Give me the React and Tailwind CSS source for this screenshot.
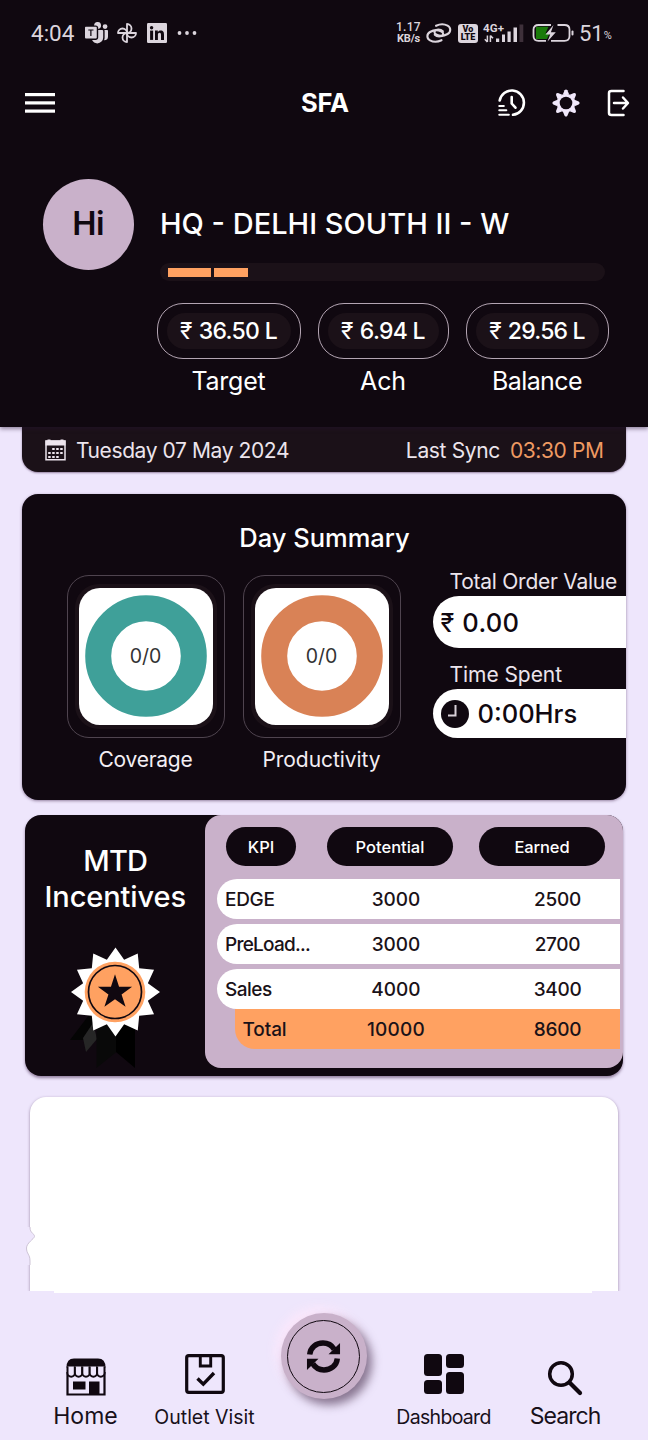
import React from "react";
import { BsMicrosoftTeams } from "react-icons/bs";

const stats = [
  { label: "Target", value: "36.50 L", box: "w-[144px]", text: "tracking-[-0.7px]", labelText: "tracking-[-0.2px]" },
  { label: "Ach", value: "6.94 L", box: "w-[131px]", text: "tracking-[-0.7px]", labelText: "tracking-[-0.1px]" },
  { label: "Balance", value: "29.56 L", box: "w-[143px]", text: "tracking-[-0.8px]", labelText: "tracking-[-0.6px]" },
];

const charts = [
  { label: "Coverage", value: "0/0", color: "#3fa099", text: "tracking-[-0.25px]" },
  { label: "Productivity", value: "0/0", color: "#d98256", text: "tracking-[-0.05px]" },
];

const incentives = [
  { kpi: "EDGE", potential: 3000, earned: 2500, text: "tracking-[-0.3px]" },
  { kpi: "PreLoad...", potential: 3000, earned: 2700, text: "tracking-[-0.75px]" },
  { kpi: "Sales", potential: 4000, earned: 3400, text: "tracking-[-0.5px]" },
];

const polar = (cx, cy, r, deg) => {
  const a = ((deg - 90) * Math.PI) / 180;
  return `${(cx + r * Math.cos(a)).toFixed(2)},${(cy + r * Math.sin(a)).toFixed(2)}`;
};

const burst = (cx, cy, outer, inner, points) =>
  Array.from({ length: points * 2 }, (_, i) =>
    polar(cx, cy, i % 2 === 0 ? outer : inner, (i * 180) / points)
  ).join(" ");

const StatusBar = () => (
  <div className="flex h-[66px] items-center pl-[31px] font-[Roboto] text-[#dcd5dd]">
    <span className="w-[54px] pt-px text-[22.5px]">4:04</span>
    <BsMicrosoftTeams className="h-[23px] w-[23px]" />
    <svg className="ml-[9px] h-5 w-5" viewBox="0 0 20 20" fill="none" stroke="currentColor" strokeWidth="1.8" strokeLinejoin="round">
      {[0, 90, 180, 270].map((deg) => (
        <path key={deg} d="M10 10V1A4.5 4.5 0 0 1 14.5 5.5A4.5 4.5 0 0 1 10 10" transform={`rotate(${deg} 10 10)`} />
      ))}
    </svg>
    <svg className="ml-[10px] h-5 w-5" viewBox="0 0 20 20">
      <rect width="20" height="20" rx="1.2" fill="currentColor" />
      <g fill="#100810">
        <circle cx="4.6" cy="4.7" r="1.7" />
        <rect x="3.1" y="7.6" width="3" height="9.3" />
        <path d="M8 7.6h2.8v1.3c.5-.9 1.5-1.5 2.8-1.5 2.8 0 3.4 1.8 3.4 4.3v5.2h-3v-4.7c0-1.2-.1-2.4-1.5-2.4s-1.6 1.1-1.6 2.3v4.8H8z" />
      </g>
    </svg>
    <svg className="ml-[10px] h-1 w-5" viewBox="0 0 20 4" fill="currentColor">
      <circle cx="2.5" cy="2" r="1.9" />
      <circle cx="10" cy="2" r="1.9" />
      <circle cx="17.5" cy="2" r="1.9" />
    </svg>

    <div className="ml-[199px] flex w-[25px] flex-col items-center font-medium whitespace-nowrap">
      <span className="text-[12px] leading-[12px] tracking-[0.3px]">1.17</span>
      <span className="text-[11px] leading-[12px] font-bold tracking-[-0.2px]">KB/s</span>
    </div>
    <svg className="ml-[5px] h-5 w-[26px]" viewBox="0 0 26 20" fill="none" stroke="currentColor" strokeWidth="2.1" strokeLinecap="round">
      {[0, 180].map((deg) => (
        <path
          key={deg}
          d="M15.5 17.2C12 19 7 19 4 17.4C0.500 15.500 0.500 11 4 9C7.500 7 12 6.800 15 8.300C18 9.800 18 12.600 14.500 13.300C12 13.600 10 13 8.800 11.800"
          transform={`rotate(${deg} 12.8 10)`}
        />
      ))}
    </svg>
    <div className="ml-[6px] flex h-[19px] w-5 flex-col items-center justify-center rounded-[3px] bg-[#dcd5dd] text-[9px] leading-[8px] font-black text-[#100810]">
      <span>Vo</span>
      <span>LTE</span>
    </div>
    <div className="ml-[5px] flex h-5 w-[41px] items-end">
      <div className="flex w-[15px] flex-col">
        <span className="-mt-[3px] text-[11.5px] leading-[12px] font-bold tracking-[0.1px]">4G+</span>
        <svg className="ml-px h-[9px] w-[10px]" viewBox="0 0 10 9" fill="none" stroke="currentColor" strokeWidth="1.5">
          <path d="M3.400 1.500v6.500M0.800 5.300l2.600 2.700M6.400 8V1.500M9 4.200L6.400 1.500" />
        </svg>
      </div>
      <svg className="h-5 w-[26px] overflow-visible" viewBox="0 0 26 20" fill="currentColor">
        <rect x="-2" y="15.500" width="3.200" height="3.500" />
        <rect x="4" y="11.500" width="3" height="7.500" />
        <rect x="9.500" y="8.500" width="3.200" height="10.500" />
        <rect x="15.500" y="4.500" width="3.500" height="14.500" />
        <rect x="21.500" y="1.500" width="3.800" height="17.500" fill="#3e303a" />
      </svg>
    </div>
    <svg className="ml-[8px] h-5 w-[42px]" viewBox="0 0 42 20">
      <path d="M4 3.700h12.500l-3 6.500h4l-2.500 5.800H4z" fill="#1a7a0a" />
      <path d="M19 2H6.500Q1.500 2 1.500 6.500v6.500q0 4.800 5 4.800H14M25.500 2h7q5 0 5 4.500v6.500q0 4.800-5 4.800H19" fill="none" stroke="currentColor" strokeWidth="1.8" />
      <path d="M21.500 2l-8 9.500h4.700L15.500 18.500l8.300-9.300h-4.900z" fill="currentColor" />
      <rect x="39.500" y="7.500" width="2" height="5" rx="1" fill="currentColor" />
    </svg>
    <span className="ml-[5px] pt-px text-[22px]">51</span>
    <span className="mt-[6px] text-[11px]">%</span>
  </div>
);

const Toolbar = () => (
  <div className="flex h-[74px] items-center pl-[24.5px] text-white">
    <svg className="h-[22px] w-[30px]" viewBox="0 0 30 22" fill="currentColor">
      <rect y="1" width="30" height="3.200" />
      <rect y="9.300" width="30" height="3.200" />
      <rect y="17.500" width="30" height="3.200" />
    </svg>
    <h1 className="ml-[245.500px] w-[50px] text-center text-[25.5px] font-bold tracking-[-0.1px]">SFA</h1>
    <svg className="ml-[147px] h-7 w-[30px]" viewBox="0 0 30 28" fill="none" stroke="currentColor" strokeWidth="2.600" strokeLinecap="round">
      <path d="M2.700 11.500A12.200 12.200 0 1 1 16 25.800" />
      <path d="M14.700 8v6.500l3.800 4.200" />
      <path d="M2.300 17h4.500M2.300 21.300h7M2.300 25.700h9.500" strokeWidth="2.100" />
    </svg>
    <svg className="ml-[25px] h-7 w-7" viewBox="0 0 28 28">
      <g fill="#f1e8fb">
        {[0, 45, 90, 135, 180, 225, 270, 315].map((deg) => (
          <path key={deg} d="M10.800 5.500L12.600 1.300Q14 -0.500 15.400 1.300L17.200 5.500z" transform={`rotate(${deg} 14 14)`} />
        ))}
        <circle cx="14" cy="14" r="9.300" />
      </g>
      <circle cx="14" cy="14" r="6.300" fill="#100810" />
    </svg>
    <svg className="ml-[27px] h-7 w-6" viewBox="0 0 24 28" fill="none" stroke="currentColor" strokeWidth="2.500" strokeLinecap="round" strokeLinejoin="round">
      <path d="M16.500 2H4.500Q2 2 2 4v20Q2 26 4.500 26H16.500" />
      <path d="M7 14h13.500M16 8.500L21 14l-5 5.500" />
    </svg>
  </div>
);

const Header = () => (
  <header className="relative z-10 h-[426.500px] bg-[#100810] shadow-[0_2px_4px_rgba(40,20,50,0.45)]">
    <StatusBar />
    <Toolbar />
    <div className="mt-[39px] flex pl-[43px]">
      <div className="flex h-[90.500px] w-[90.500px] shrink-0 items-center justify-center rounded-full bg-[#c9b1ca] pt-px text-[32.5px] font-semibold tracking-[-0.3px] text-[#100810]">
        Hi
      </div>
      <div className="ml-[26.500px] pt-[30px] text-white">
        <h2 className="h-[30px] text-[29px] leading-[30px] font-medium whitespace-nowrap">
          HQ - DELHI SOUTH II - W
        </h2>
        <div className="mt-[24px] flex h-[18px] w-[445px] items-center gap-[3px] rounded-full bg-[#1b1118] pl-2">
          <div className="h-[9px] w-[43px] bg-[#ffa161]" />
          <div className="h-[9px] w-[33.5px] bg-[#ffa161]" />
        </div>
        <div className="mt-[21.500px] -ml-[3.500px] flex gap-[17px]">
          {stats.map((stat) => (
            <div key={stat.label} className={`flex flex-col items-center ${stat.box}`}>
              <div className="h-[56px] w-full rounded-[26px] border border-[#b3a4b2] p-[9px]">
                <div className={`flex h-full items-center justify-center gap-[7px] rounded-full bg-[#1b1118] pt-[2px] text-[23px] font-medium whitespace-nowrap ${stat.text}`}>
                  <span className="text-[23px] font-normal">₹</span>
                  {stat.value}
                </div>
              </div>
              <div className={`mt-[7.500px] h-[30px] text-[25px] leading-[30px] ${stat.labelText}`}>{stat.label}</div>
            </div>
          ))}
        </div>
      </div>
    </div>
  </header>
);

const DateBar = () => (
  <div className="mx-[22px] flex h-[45.500px] items-center rounded-b-2xl bg-[#1b1118] pt-px pr-[22.500px] pl-[22.500px] text-[21px] text-[#ece4ec] shadow-[0_1px_2px_rgba(60,30,70,0.5)]">
    <svg className="h-[22px] w-[21px]" viewBox="0 0 21 22" fill="none">
      <path d="M1 2h19v18.800H1z" stroke="currentColor" strokeWidth="1.500" />
      <path d="M0.500 1.500h2v-1h3v1h10v-1h3v1h2V6.500H0.500z" fill="currentColor" />
      <path d="M7.200 10h10.500M3.200 14h14.500M3.200 18h10.500" stroke="currentColor" strokeWidth="2.200" strokeDasharray="2.500 1.500" />
    </svg>
    <span className="ml-[10.500px] pt-px tracking-[-0.4px]">Tuesday 07 May 2024</span>
    <span className="ml-auto pt-px tracking-[-0.35px]">Last Sync</span>
    <span className="ml-[10px] pt-px tracking-[-0.4px] text-[#ef9a62]">03:30 PM</span>
  </div>
);

const Donut = ({ label, value, color, text }) => (
  <div className="flex w-[158px] flex-col items-center">
    <div className="flex h-[163px] w-full items-center justify-center rounded-[22px] border border-[#4f444f]">
      <div className="rounded-[24px] bg-[#1b1118] p-1">
        <div className="relative flex h-[137px] w-[134px] items-center justify-center rounded-[21px] bg-white">
          <svg className="absolute h-[122px] w-[122px]" viewBox="0 0 122 122">
            <circle cx="61" cy="61" r="47.800" fill="none" stroke={color} strokeWidth="26" />
          </svg>
          <span className="pt-[2px] text-[19.500px] text-[#333]">{value}</span>
        </div>
      </div>
    </div>
    <div className={`mt-[7px] h-[30px] text-[21px] leading-[30px] text-[#f3eef3] ${text}`}>{label}</div>
  </div>
);

const DaySummary = () => (
  <section className="mx-[22px] mt-[22px] h-[305.5px] overflow-hidden rounded-2xl bg-[#100810] pt-[28px] text-white shadow-[0_1px_3px_rgba(60,30,70,0.5)]">
    <h2 className="h-[32px] pl-px text-center text-[25.500px] leading-[32px] font-medium">Day Summary</h2>
    <div className="mt-[20.500px] flex pl-[44.500px]">
      <div className="flex gap-[18px]">
        {charts.map((chart) => (
          <Donut key={chart.label} {...chart} />
        ))}
      </div>
      <div className="-mt-[6.500px] ml-[32px] flex-1 text-[21px] text-[#ece4ec]">
        <div className="h-[28px] pl-[17px] leading-[27px] tracking-[-0.25px] whitespace-nowrap">Total Order Value</div>
        <div className="flex h-[52px] items-center gap-[8px] rounded-l-full bg-white pt-[2px] pl-2 text-[25.500px] font-medium text-[#100810]">
          <span className="text-[25.500px] font-normal">₹</span>
          <span className="tracking-[0.3px]">0.00</span>
        </div>
        <div className="mt-[13px] h-[28px] pl-[17px] leading-[28px] tracking-[-0.05px]">Time Spent</div>
        <div className="flex h-[49px] items-center gap-[9px] rounded-l-full bg-white pl-2 text-[25.500px] font-medium text-[#100810]">
          <svg className="h-7 w-7" viewBox="0 0 28 28">
            <circle cx="14" cy="14" r="14" fill="#100810" />
            <path d="M14.500 5v10.500H7" fill="none" stroke="#d8d0d8" strokeWidth="2" />
          </svg>
          <span className="pt-[2px]">0:00Hrs</span>
        </div>
      </div>
    </div>
  </section>
);

const Badge = () => (
  <svg className="h-[124px] w-[94px]" viewBox="0 0 94 124">
    <path d="M20 68L1 93h14l14-17z" fill="#040404" />
    <path d="M14 91L24 76 28 92 17 105z" fill="#262626" />
    <path d="M27.500 78h20v27L27.500 121z" fill="#090909" />
    <path d="M47 78h19v43L47 105z" fill="#000" />
    <polygon points={burst(46.5, 45, 44.5, 33.5, 12)} fill="#fff" />
    <circle cx="46" cy="45" r="30.300" fill="#ffa161" />
    <circle cx="46" cy="45" r="26.500" fill="none" stroke="#100810" strokeWidth="1.700" />
    <polygon points={burst(46, 45.3, 18, 6.9, 5)} fill="#100810" />
  </svg>
);

const Incentives = () => (
  <section className="mx-[25px] mt-[15px] flex h-[261.500px] rounded-2xl bg-[#100810] shadow-[0_2px_3px_rgba(60,30,70,0.5)]">
    <div className="flex w-[179.500px] shrink-0 flex-col items-center pt-[28px] pl-px text-white">
      <h2 className="text-center text-[29px] leading-[36px] font-medium">
        <span className="tracking-[-0.7px]">MTD</span>
        <br />
        <span className="tracking-[-0.1px]">Incentives</span>
      </h2>
      <div className="mt-[32px] ml-[2px]">
        <Badge />
      </div>
    </div>
    <div className="h-[253px] flex-1 rounded-2xl bg-[#c9b1ca] pt-[12.500px] pr-[3px] pl-[12.500px] text-[19px] font-medium text-[#1a1218]">
      <div className="flex pl-[9px] text-[16.500px] text-white">
        <div className="flex h-[38.500px] w-[70px] items-center justify-center rounded-full bg-[#100810] pt-[2px]">KPI</div>
        <div className="ml-[31px] flex h-[38.500px] w-[126px] items-center justify-center rounded-full bg-[#100810] pt-[2px]">Potential</div>
        <div className="ml-[26px] flex h-[38.500px] w-[126px] items-center justify-center rounded-full bg-[#100810] pt-[2px] tracking-[-0.1px]">Earned</div>
      </div>
      <div className="mt-[13px] flex flex-col gap-[5px]">
        {incentives.map((row) => (
          <div key={row.kpi} className="flex h-10 items-center rounded-l-full bg-white pt-[3px]">
            <span className={`w-[98px] shrink-0 pl-[8px] whitespace-nowrap ${row.text}`}>{row.kpi}</span>
            <span className="w-[162px] shrink-0 text-center">{row.potential}</span>
            <span className="flex-1 pl-[18px] text-center tracking-[-0.3px]">{row.earned}</span>
          </div>
        ))}
      </div>
      <div className="ml-[17.500px] flex h-10 items-center rounded-bl-[20px] bg-[#ffa161] pt-[3px]">
        <span className="w-[80.500px] shrink-0 pl-[8px] tracking-[-0.1px]">Total</span>
        <span className="w-[162px] shrink-0 text-center tracking-[0.2px]">10000</span>
        <span className="flex-1 pl-[18px] text-center tracking-[-0.3px]">8600</span>
      </div>
    </div>
  </section>
);

const EmptyCard = () => (
  <section className="relative mx-[30px] mt-[21px] h-[194px] rounded-t-2xl bg-white shadow-[0_1px_3px_rgba(60,30,70,0.5)]">
    <svg className="absolute top-[130px] -left-[5px] h-[38px] w-[12px]" viewBox="0 0 12 38">
      <path d="M0 0H5C5 7 9.500 6 9.500 9.500C9 12 1.500 16 1.500 21C1.500 27 5 27 5 34V38H0z" fill="#eee6fc" />
      <path d="M5 0C5 7 9.500 6 9.500 9.500C9 12 1.500 16 1.500 21C1.500 27 5 27 5 34V38H12V0z" fill="#fff" />
      <path d="M5 0C5 7 9.500 6 9.500 9.500C9 12 1.500 16 1.500 21C1.500 27 5 27 5 34V38" fill="none" stroke="#cdc3d6" strokeWidth="1" />
    </svg>
  </section>
);

const HomeIcon = () => (
  <svg className="h-[38px] w-10" viewBox="0 0 40 38">
    <path d="M1.500 14v22.500h37V14" fill="none" stroke="#100810" strokeWidth="2.200" />
    <path d="M0.500 9.500Q0.500 0.500 8 0.500H32Q39.500 0.500 39.500 9.500z" fill="#100810" />
    {[1.5, 8.9, 16.3, 23.7, 31.1].map((x) => (
      <path key={x} d={`M${x} 8.500v6.500a3.700 3.700 0 0 0 7.400 0v-6.500`} fill="#eee6fc" stroke="#100810" strokeWidth="2" />
    ))}
    <rect x="7" y="23.500" width="12.500" height="8" fill="#100810" />
    <rect x="23" y="23.500" width="10.500" height="13" fill="#100810" />
  </svg>
);

const OutletIcon = () => (
  <svg className="h-10 w-10" viewBox="0 0 40 40" fill="none" stroke="#100810">
    <rect x="1.700" y="1.700" width="36.600" height="36.600" rx="2" strokeWidth="3.200" />
    <path d="M15.300 1.500v10.500h10.400V1.500" strokeWidth="2.900" />
    <path d="M12.500 24.500l5.800 5.700L29 19" strokeWidth="3.400" />
  </svg>
);

const DashboardIcon = () => (
  <svg className="h-10 w-10" viewBox="0 0 40 40" fill="#100810">
    <rect width="18" height="22" rx="3.500" />
    <rect x="22" width="18" height="14" rx="3.500" />
    <rect y="26" width="18" height="14" rx="3.500" />
    <rect x="22" y="18" width="18" height="22" rx="3.500" />
  </svg>
);

const SearchIcon = () => (
  <svg className="h-9 w-9" viewBox="0 0 36 36" fill="none" stroke="#100810">
    <circle cx="14" cy="14" r="11.300" strokeWidth="3.500" />
    <path d="M22.500 22.500L33 33" strokeWidth="4.200" strokeLinecap="round" />
  </svg>
);

const BottomNav = () => (
  <nav className="relative flex h-[149px] items-end bg-[#eee6fc] pl-[26px] text-[#18101a]">
    <div className="absolute top-0 left-[54px] h-[2px] w-[538px] bg-white" />
    <div className="flex w-[119px] shrink-0 flex-col items-center pb-[9px]">
      <HomeIcon />
      <span className="mt-[5px] text-[23px] leading-[30px]">Home</span>
    </div>
    <div className="flex w-[119px] shrink-0 flex-col items-center pb-[8px]">
      <OutletIcon />
      <span className="mt-[8px] text-[19.500px] leading-[30px]">Outlet Visit</span>
    </div>
    <div className="flex w-[120px] shrink-0 justify-center pr-px pb-[41px]">
      <button className="flex h-[86px] w-[86px] items-center justify-center rounded-full bg-[#c9b1ca] shadow-[5px_6px_10px_rgba(70,45,75,0.6),-5px_-5px_12px_rgba(253,232,252,0.95)]">
        <span className="flex h-[73px] w-[73px] items-center justify-center rounded-full border-[1.500px] border-[#100810]">
          <svg className="h-[35px] w-[35px]" viewBox="0 0 36 36" fill="none" stroke="#100810" strokeWidth="5.600">
            <path d="M3.800 16C4.500 8.500 10.500 4.200 17.500 4.200C22.500 4.200 26.500 6.500 29 10.500" />
            <path d="M32.200 20C31.500 27.500 25.500 31.800 18.500 31.800C13.500 31.800 9.500 29.500 7 25.500" />
            <path d="M35 4v11.800H23.200zM1 32V20.200h11.800z" fill="#100810" stroke="none" />
          </svg>
        </span>
      </button>
    </div>
    <div className="flex w-[119px] shrink-0 flex-col items-center pb-[8px]">
      <DashboardIcon />
      <span className="mt-[8px] text-[19.500px] leading-[30px] tracking-[-0.7px]">Dashboard</span>
    </div>
    <div className="flex w-[124px] shrink-0 flex-col items-center pb-[9px]">
      <SearchIcon />
      <span className="mt-[5px] text-[23px] leading-[30px] tracking-[-0.95px]">Search</span>
    </div>
  </nav>
);

const App = () => {
  return (
    <div className="h-[1440px] w-[648px] overflow-hidden bg-[#eee6fc] font-[Inter,sans-serif]">
      <Header />
      <DateBar />
      <DaySummary />
      <Incentives />
      <EmptyCard />
      <BottomNav />
    </div>
  );
};

export default App;
